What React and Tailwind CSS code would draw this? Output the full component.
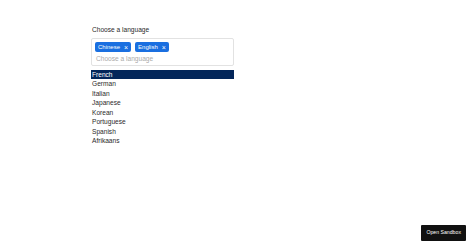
import React from "react";

const options = ["French", "German", "Italian", "Japanese", "Korean", "Portuguese", "Spanish", "Afrikaans"];

const Tag = ({ label }) => (
  <span className="inline-flex items-center gap-[4px] h-[10px] px-[3px] rounded-[2px] bg-[#1a6fe0] text-white text-[6px] leading-none">
    {label}
    <span className="text-[7px] leading-none">×</span>
  </span>
);

export default function App() {
  return (
    <div
      className="relative w-[474px] h-[248px] bg-white text-[#2a2a2a]"
      style={{ fontFamily: '"Liberation Sans", Arial, sans-serif' }}
    >
      <div className="pt-[25px] pl-[91px] w-[234px]">
        <div className="text-[6.6px] leading-[9px] pl-[1px] mb-[4px]">Choose a language</div>
        <div className="border border-[#e2e2e2] rounded-[2px] px-[3px] pt-[3px] pb-[2px]">
          <div className="flex gap-[4px]">
            <Tag label="Chinese" />
            <Tag label="English" />
          </div>
          <div className="text-[6.6px] leading-[9px] text-[#aaa] mt-[2px] pl-[1px]">Choose a language</div>
        </div>
        <ul className="mt-[4px] text-[6.6px] leading-[9.45px]">
          {options.map((o, i) => (
            <li key={o} className={i === 0 ? "bg-[#03265a] text-white px-[1px]" : "px-[1px]"}>
              {o}
            </li>
          ))}
        </ul>
      </div>
      <div className="absolute right-[8px] bottom-[7px] bg-[#111] text-white text-[5.2px] px-[5px] py-[4px] rounded-[1px]">
        Open Sandbox
      </div>
    </div>
  );
}
